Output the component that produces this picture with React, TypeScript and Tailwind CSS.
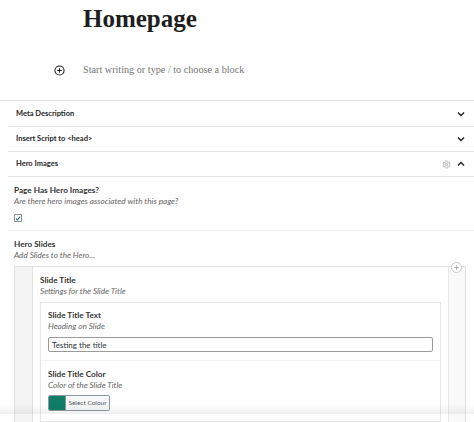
import { Settings } from 'lucide-react'

function Chevron({ up = false }: { up?: boolean }) {
  return (
    <svg width="8" height="6" viewBox="0 0 8 6" className="text-[#1e1e1e]">
      <polyline
        points={up ? '1,4.5 4,1.5 7,4.5' : '1,1.5 4,4.5 7,1.5'}
        fill="none"
        stroke="currentColor"
        strokeWidth="1.4"
      />
    </svg>
  )
}

function MetaRow({ title, open = false }: { title: string; open?: boolean }) {
  return (
    <div className="h-[25px] flex items-center justify-between pl-[8px] pr-[9px] border-b border-[#e4e4e4]">
      <span className="text-[7.5px] font-bold text-[#1e1e1e]">{title}</span>
      <div className="flex items-center gap-[6px]">
        {open && <Settings size={9} strokeWidth={3} className="text-[#c8c9cc]" />}
        <Chevron up={open} />
      </div>
    </div>
  )
}

function FieldHead({ label, desc }: { label: string; desc: string }) {
  return (
    <div>
      <div className="text-[8.2px] leading-[11px] font-bold text-[#333]">{label}</div>
      <div className="text-[8.2px] leading-[11px] italic text-[#666]">{desc}</div>
    </div>
  )
}

export default function App() {
  return (
    <div className="relative w-[474px] h-[422px] overflow-hidden bg-white font-['Lato',sans-serif]">
      {/* Editor canvas */}
      <div className="pt-[4px] pl-[83px]">
        <h1 className="font-['Liberation_Serif',serif] text-[25px] leading-[30px] font-bold text-[#1e1e1e]">
          Homepage
        </h1>
      </div>
      <div className="mt-[29px] flex items-center h-[14px]">
        <div className="w-[83px] flex justify-end pr-[18px]">
          <svg width="11" height="11" viewBox="0 0 12 12">
            <circle cx="6" cy="6" r="5" fill="none" stroke="#1e1e1e" strokeWidth="1.1" />
            <path d="M6 3.5v5M3.5 6h5" stroke="#1e1e1e" strokeWidth="1.1" />
          </svg>
        </div>
        <span className="font-['Liberation_Serif',serif] text-[10.2px] leading-[14px] text-[#757575]">
          Start writing or type / to choose a block
        </span>
      </div>

      {/* Meta boxes */}
      <div className="mt-[23px] border-t border-[#e4e4e4]">
        <div className="ml-[8px]">
          <div className="pt-[1px]" />
          <MetaRow title="Meta Description" />
          <MetaRow title="Insert Script to <head>" />
          <MetaRow title="Hero Images" open />

          <div className="pl-[6px] pr-[8px] pt-[8px] pb-[8px] border-b border-[#eeeeee]">
            <FieldHead label="Page Has Hero Images?" desc="Are there hero images associated with this page?" />
            <div className="mt-[7px] w-[8px] h-[8px] border border-[#8c8f94] rounded-[1px] bg-white flex items-center justify-center">
              <svg width="7" height="7" viewBox="0 0 8 8">
                <polyline points="1.3,4.2 3.2,6 6.8,1.6" fill="none" stroke="#1d6f8f" strokeWidth="1.5" />
              </svg>
            </div>
          </div>

          <div className="pl-[6px] pr-[8px] pt-[8px]">
            <FieldHead label="Hero Slides" desc="Add Slides to the Hero..." />
            <div className="relative mt-[5px] flex border border-[#e1e1e1] h-[200px]">
              <div className="w-[18px] bg-[#f4f4f4] border-r border-[#e1e1e1]" />
              <div className="flex-1 px-[7px] pt-[8px]">
                <FieldHead label="Slide Title" desc="Settings for the Slide Title" />
                <div className="mt-[5px] border border-[#e6e6e6]">
                  <div className="px-[7px] pt-[7px] pb-[8px] border-b border-[#f0f0f0]">
                    <FieldHead label="Slide Title Text" desc="Heading on Slide" />
                    <div className="mt-[5px] h-[15px] border border-[#9a9a9a] rounded-[2px] flex items-center px-[3px] text-[8px] text-[#2c3338]">
                      Testing the title
                    </div>
                  </div>
                  <div className="px-[7px] pt-[8px] pb-[10px]">
                    <FieldHead label="Slide Title Color" desc="Color of the Slide Title" />
                    <div className="mt-[4px] w-[62px] h-[16px] flex border border-[#8c9aa0] rounded-[2px] overflow-hidden">
                      <div className="w-[16px] bg-[#107e66]" />
                      <div className="flex-1 bg-[#f6f7f7] border-l border-[#8c9aa0] flex items-center justify-center text-[6.5px] text-[#50575e]">
                        Select Colour
                      </div>
                    </div>
                  </div>
                </div>
              </div>
              <div className="w-[17px] bg-[#f9f9f9] border-l border-[#e8e8e8]" />
              <div className="absolute -top-[5px] right-[3px] w-[11px] h-[11px] rounded-full border border-[#c9c9c9] bg-white flex items-center justify-center">
                <svg width="7" height="7" viewBox="0 0 8 8">
                  <path d="M4 1.5v5M1.5 4h5" stroke="#9a9a9a" strokeWidth="0.9" />
                </svg>
              </div>
            </div>
          </div>
        </div>
      </div>

      {/* bottom fade */}
      <div className="absolute left-0 right-0 top-[403px] h-[11px] bg-gradient-to-b from-transparent to-black/[0.06]" />
    </div>
  )
}
